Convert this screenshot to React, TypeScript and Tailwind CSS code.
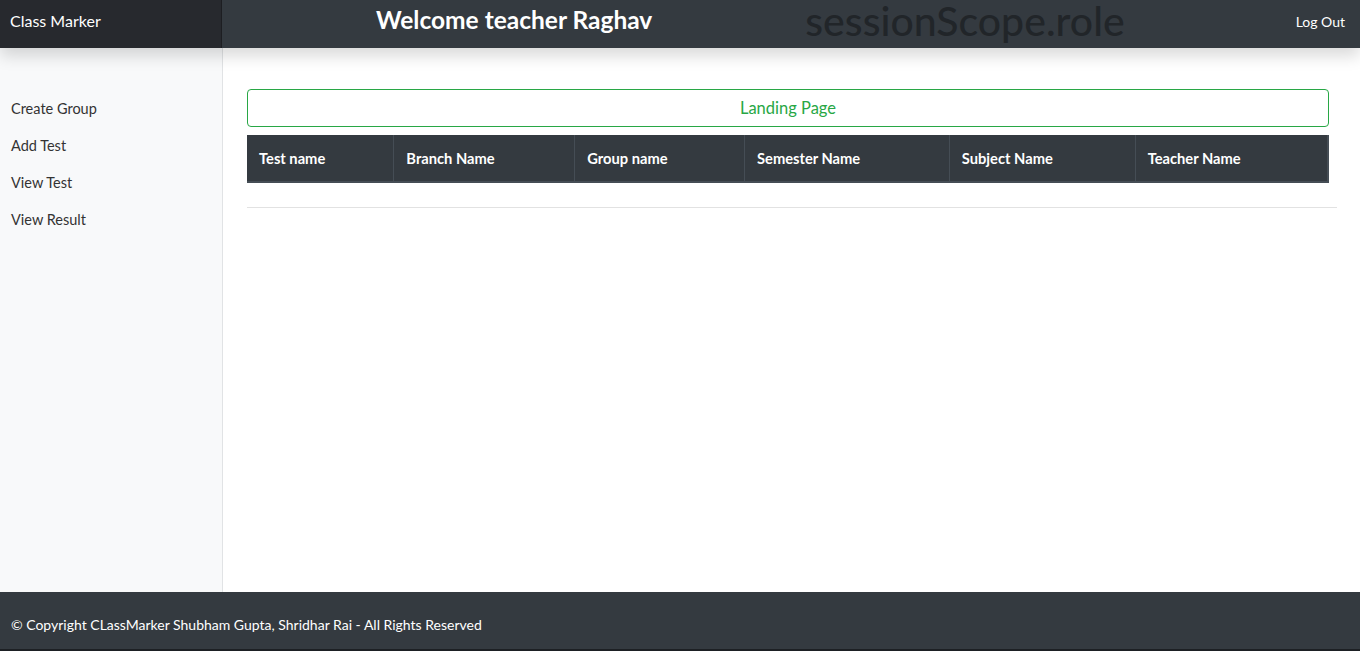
const columns = [
  { label: "Test name", w: "w-[147px]" },
  { label: "Branch Name", w: "w-[181px]" },
  { label: "Group name", w: "w-[170px]" },
  { label: "Semester Name", w: "w-[205px]" },
  { label: "Subject Name", w: "w-[186px]" },
  { label: "Teacher Name", w: "w-[193px]" },
];

const links = ["Create Group", "Add Test", "View Test", "View Result"];

const App = () => {
  return (
    <div className="h-screen flex flex-col bg-white font-['Lato','Open_Sans',sans-serif] text-[#212529] overflow-hidden">
      {/* Top navbar */}
      <nav className="relative z-10 h-12 shrink-0 flex items-stretch bg-[#343a40] shadow-[0_8px_16px_rgba(0,0,0,0.15)]">
        <a className="w-[222px] shrink-0 flex items-center pl-[10px] pb-[6px] bg-[#27292e] shadow-[inset_-1px_0_0_rgba(0,0,0,0.25)] text-white text-[16px]">
          Class Marker
        </a>
        <h3 className="ml-[154px] flex items-center text-white text-[24.5px] font-bold leading-none pb-[8px]">
          Welcome teacher Raghav
        </h3>
        <h1 className="ml-[153px] flex items-center text-[#212529] text-[41px] font-medium leading-[40px] pb-[6px]">
          sessionScope.role
        </h1>
        <a className="ml-auto pr-[15px] flex items-center text-white text-[14px] pb-[6px]">Log Out</a>
      </nav>

      <div className="flex-1 flex min-h-0">
        {/* Sidebar */}
        <aside className="w-[223px] shrink-0 bg-[#f8f9fa] border-r border-[#e1e3e5] pt-[42px]">
          <ul className="flex flex-col">
            {links.map((l) => (
              <li key={l} className="h-[37px] flex items-center pl-[11px] text-[14.5px] text-[#333]">
                {l}
              </li>
            ))}
          </ul>
        </aside>

        {/* Main */}
        <main className="flex-1 pl-[24px] pr-[23px] pt-[41px]">
          <div className="w-[1082px] h-[38px] flex items-center justify-center border border-[#28a745] rounded-[4px] text-[#28a745] text-[16.5px]">
            Landing Page
          </div>
          <table className="mt-[8px] w-[1082px] border-collapse">
            <thead>
              <tr className="bg-[#343a40] border-b-2 border-[#454d55]">
                {columns.map((c, i) => (
                  <th
                    key={c.label}
                    className={`${c.w} h-[47px] px-[12px] pt-[1px] text-left text-white text-[14.7px] font-bold ${i > 0 ? "border-l border-[#454d55]" : ""} ${i === columns.length - 1 ? "border-r-2 border-r-[#454d55]" : ""}`}
                  >
                    {c.label}
                  </th>
                ))}
              </tr>
            </thead>
          </table>
          <hr className="mt-[24px] w-[1090px] border-t border-[#e2e2e2]" />
        </main>
      </div>

      {/* Footer */}
      <footer className="h-[59px] shrink-0 bg-[#343a40] border-b-2 border-[#1d2024] flex items-center pl-[11px] pt-[8px] text-white text-[14px]">
        © Copyright CLassMarker Shubham Gupta, Shridhar Rai - All Rights Reserved
      </footer>
    </div>
  );
};

export default App;
